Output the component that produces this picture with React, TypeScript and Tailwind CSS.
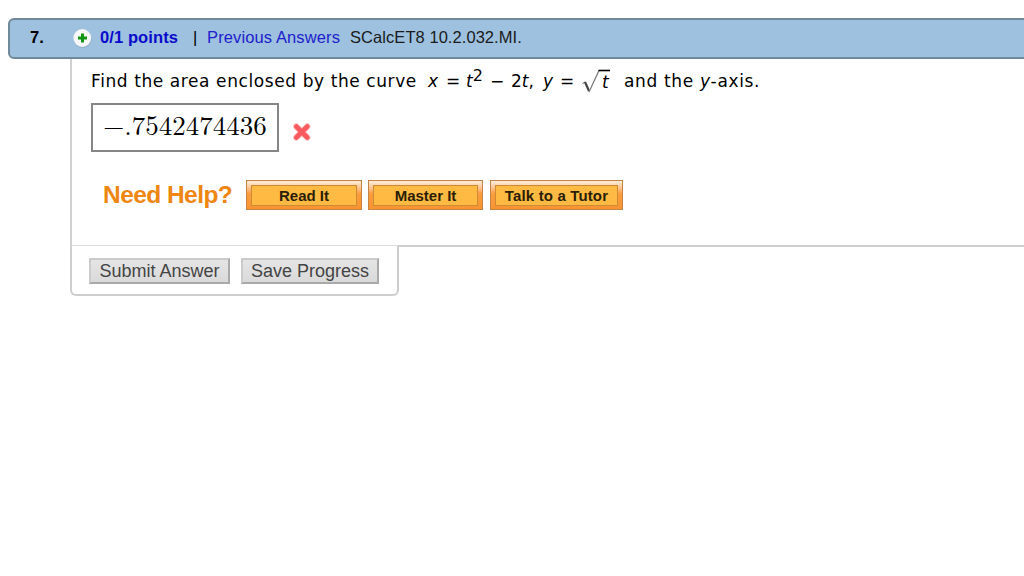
import type { ReactNode } from "react";

type ButtonProps = {
  className: string;
  children: ReactNode;
};

function HelpButton({ className, children }: ButtonProps) {
  return (
    <button
      className={`h-[30px] shrink-0 border border-[#c58445] bg-linear-to-b from-[#ffe6cf] from-5% via-[#fb9d3c] via-45% to-[#f79432] p-[4px] pb-[3px] text-[15px] ${className}`}
    >
      <span className="flex h-full items-center justify-center border border-[#cf8a35] bg-[#feba43] pt-px font-bold whitespace-nowrap text-[#2b1d05]">
        {children}
      </span>
    </button>
  );
}

function FormButton({ className, children }: ButtonProps) {
  return (
    <button
      className={`h-[26px] shrink-0 border-2 border-t-[#cbcbcb] border-r-[#a9a9a9] border-b-[#a9a9a9] border-l-[#cbcbcb] bg-linear-to-b from-[#e5e5e5] to-[#dadada] text-[18px] leading-[21px] whitespace-nowrap text-[#444] ${className}`}
    >
      {children}
    </button>
  );
}

function PlusIcon() {
  return (
    <svg className="ml-[28px] h-5 w-5 shrink-0" viewBox="0 0 20 20">
      <circle cx="10.6" cy="10.8" r="9" fill="#7f9cb2" opacity="0.55" />
      <circle cx="10.3" cy="10" r="8.9" fill="#f6f6f6" />
      <path d="M10.5 5.6v9M6 10.1h9" stroke="#129512" strokeWidth="3" />
    </svg>
  );
}

function WrongIcon() {
  return (
    <svg className="mt-[19px] ml-[13px] h-[21px] w-5" viewBox="0 0 20 21">
      <g strokeLinecap="round">
        <path d="M4.3 4.5 15.3 15.5M15.3 4.5 4.3 15.5" stroke="#ffc4c4" strokeWidth="6.4" />
        <path d="M4.3 4.5 15.3 15.5M15.3 4.5 4.3 15.5" stroke="#fa5b60" strokeWidth="4.6" />
      </g>
    </svg>
  );
}

export default function App() {
  return (
    <div className="h-[576px] w-[1024px] overflow-hidden bg-white pt-[18px] font-['Liberation_Sans',Arial,sans-serif] text-black">
      <header className="ml-2 flex h-[41px] w-[1030px] items-center rounded-md border-2 border-[#6f899b] bg-[#9dc1de] pb-[2px] text-[16.5px] whitespace-pre">
        <b className="ml-5 w-[14px]">7.</b>
        <PlusIcon />
        <b className="ml-[8px] w-[93px] tracking-[0.1px] text-[#0a0acc]">0/1 points</b>
        <span className="w-[14px]">|</span>
        <span className="w-[143px] tracking-[0.12px] text-[#2020cc]">Previous Answers</span>
        <span className="tracking-[0.06px] text-[#1b1b1b]">SCalcET8 10.2.032.MI.</span>
      </header>

      <main className="ml-[70px] h-[187px] border-l-2 border-[#d0d0d0] pt-[9px] pl-[19px]">
        <p className="flex h-[28px] items-center font-['DejaVu_Sans',Verdana,sans-serif] text-[17px] whitespace-pre">
          <span className="w-[337px] tracking-[0.59px]">Find the area enclosed by the curve</span>
          <i className="w-[18px]">x</i>
          <span className="w-[20px]">=</span>
          <span className="w-[24px]">
            <i>t</i>
            <span className="relative -top-[6px] text-[16px]">2</span>
          </span>
          <span className="w-[21px]">−</span>
          <span className="w-[32px]">
            2<i>t</i>,
          </span>
          <i className="w-[17px]">y</i>
          <span className="w-[21px]">=</span>
          <svg className="h-7 w-[29px]" viewBox="0 0 29 28" fill="none">
            <path d="M1.5 15.5 4 14" stroke="#555" />
            <path d="m4 14 4 9" stroke="#444" strokeWidth="2.2" />
            <path d="M8 24 18 2.5" stroke="#777" strokeWidth="1.2" />
            <path d="M17.5 2.5H29" stroke="#000" strokeWidth="1.6" />
          </svg>
          <i className="-ml-2 w-[22px] pt-px">t</i>
          <span className="tracking-[0.65px]">
            and the <i>y</i>-axis.
          </span>
        </p>

        <div className="mt-[7px] flex h-[49px]">
          <div className="flex w-[188px] items-center justify-center border-2 border-[#868686] pb-px font-['Latin_Modern_Math','Liberation_Serif',serif] text-[27px] whitespace-nowrap">
            −.7542474436
          </div>
          <WrongIcon />
        </div>

        <div className="mt-[28px] flex h-[30px] items-center">
          <span className="ml-[12px] w-[143px] text-[24.5px] font-bold tracking-[-0.55px] whitespace-nowrap text-[#ee8712]">
            Need Help?
          </span>
          <HelpButton className="w-[116px]">Read It</HelpButton>
          <HelpButton className="ml-[6px] w-[115px]">Master It</HelpButton>
          <HelpButton className="ml-[7px] w-[133px] tracking-[0.15px]">Talk to a Tutor</HelpButton>
        </div>
      </main>

      <footer className="ml-[70px] flex h-[50px]">
        <div className="-mt-px flex w-[329px] rounded-b-md border-2 border-t border-[#cecece] border-t-[#dcdcdc] pt-[12px] pl-[17px]">
          <FormButton className="w-[141px]">Submit Answer</FormButton>
          <FormButton className="ml-[11px] w-[138px]">Save Progress</FormButton>
        </div>
        <div className="-mt-px h-0 flex-1 border-t-2 border-[#cecece]" />
      </footer>
    </div>
  );
}
